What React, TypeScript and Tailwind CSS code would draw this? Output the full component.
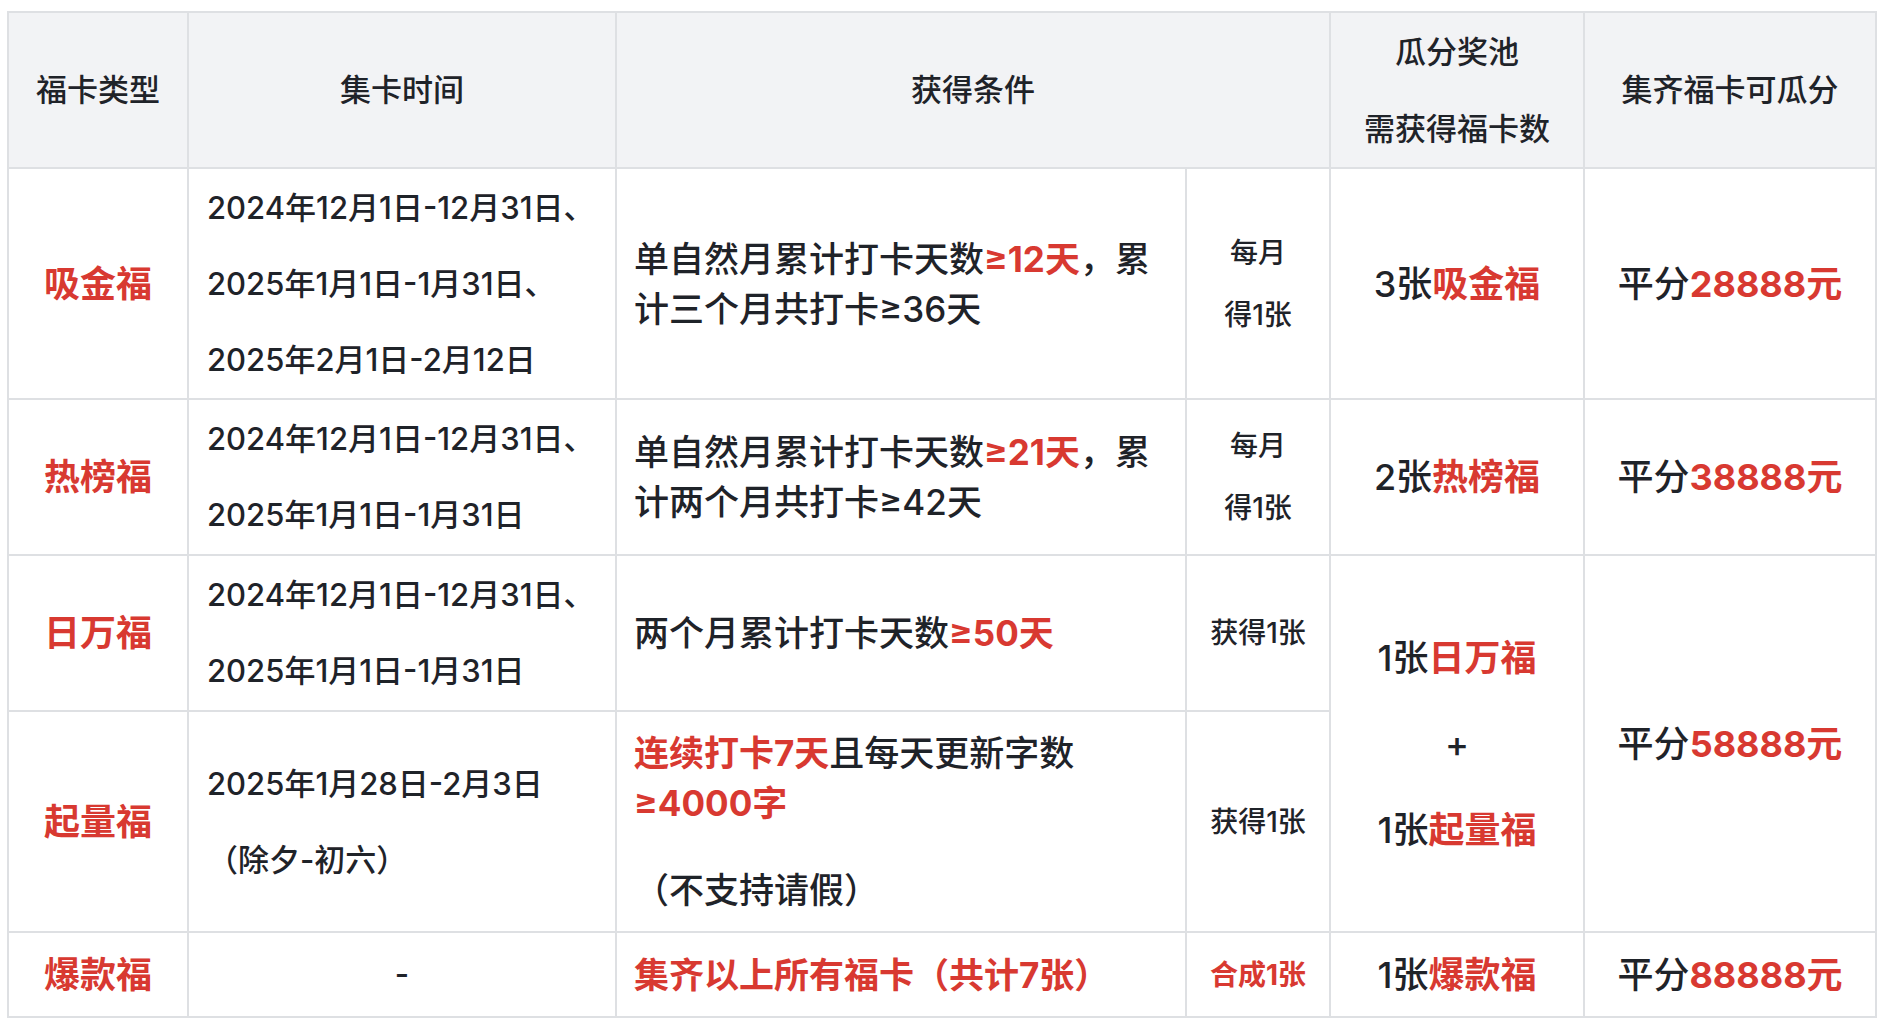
import type { ReactNode } from 'react';

// Shared cell styling: 2px light grey grid lines, everything vertically centred.
const cell = 'border-2 border-[#dee0e3] align-middle p-0';

const Red = ({ children }: { children: ReactNode }) => (
  <span className="font-bold text-[#d83931]">{children}</span>
);

// Type label in the first column.
const TypeCell = ({ name }: { name: string }) => (
  <td className={`${cell} text-center text-[36px] leading-[50px]`}>
    <Red>{name}</Red>
  </td>
);

// Date lines in the second column.
const DateCell = ({ lines }: { lines: string[] }) => (
  <td className={`${cell} pl-[18px] text-[31px]`}>
    {lines.map(line => (
      <div key={line} className="leading-[76px] whitespace-nowrap">
        {line}
      </div>
    ))}
  </td>
);

const SmallCell = ({ children, rowSpan }: { children: ReactNode; rowSpan?: number }) => (
  <td rowSpan={rowSpan} className={`${cell} text-center text-[28px] leading-[62px]`}>
    {children}
  </td>
);

export default function App() {
  return (
    <div className="min-h-screen bg-white pt-[11px] pl-[7px] font-[family-name:Inter,'Noto_Sans_CJK_SC',sans-serif] font-medium text-[#1f2329]">
      <table className="w-[1868px] table-fixed border-collapse">
        <colgroup>
          <col className="w-[180px]" />
          <col className="w-[428px]" />
          <col className="w-[570px]" />
          <col className="w-[144px]" />
          <col className="w-[254px]" />
          <col className="w-[292px]" />
        </colgroup>
        <thead>
          <tr className="h-[155px] bg-[#f2f3f5] text-[31px]">
            <th className={`${cell} font-medium`}>福卡类型</th>
            <th className={`${cell} font-medium`}>集卡时间</th>
            <th colSpan={2} className={`${cell} font-medium`}>获得条件</th>
            <th className={`${cell} font-medium`}>
              <div className="leading-[77px]">瓜分奖池</div>
              <div className="leading-[77px]">需获得福卡数</div>
            </th>
            <th className={`${cell} font-medium`}>集齐福卡可瓜分</th>
          </tr>
        </thead>
        <tbody>
          {/* 吸金福 */}
          <tr className="h-[231px]">
            <TypeCell name="吸金福" />
            <DateCell lines={['2024年12月1日-12月31日、', '2025年1月1日-1月31日、', '2025年2月1日-2月12日']} />
            <td className={`${cell} pl-[17px] text-[35px] leading-[50px] whitespace-nowrap`}>
              单自然月累计打卡天数<Red>≥12天</Red>，累
              <br />
              计三个月共打卡≥36天
            </td>
            <SmallCell>
              <div>每月</div>
              <div>得1张</div>
            </SmallCell>
            <td className={`${cell} text-center text-[36px]`}>
              3张<Red>吸金福</Red>
            </td>
            <td className={`${cell} text-center text-[36px]`}>
              平分<Red>28888元</Red>
            </td>
          </tr>

          {/* 热榜福 */}
          <tr className="h-[156px]">
            <TypeCell name="热榜福" />
            <DateCell lines={['2024年12月1日-12月31日、', '2025年1月1日-1月31日']} />
            <td className={`${cell} pl-[17px] text-[35px] leading-[50px] whitespace-nowrap`}>
              单自然月累计打卡天数<Red>≥21天</Red>，累
              <br />
              计两个月共打卡≥42天
            </td>
            <SmallCell>
              <div>每月</div>
              <div>得1张</div>
            </SmallCell>
            <td className={`${cell} text-center text-[36px]`}>
              2张<Red>热榜福</Red>
            </td>
            <td className={`${cell} text-center text-[36px]`}>
              平分<Red>38888元</Red>
            </td>
          </tr>

          {/* 日万福 */}
          <tr className="h-[156px]">
            <TypeCell name="日万福" />
            <DateCell lines={['2024年12月1日-12月31日、', '2025年1月1日-1月31日']} />
            <td className={`${cell} pl-[17px] text-[35px] leading-[50px] whitespace-nowrap`}>
              两个月累计打卡天数<Red>≥50天</Red>
            </td>
            <SmallCell>获得1张</SmallCell>
            <td rowSpan={2} className={`${cell} text-center text-[36px]`}>
              <div className="leading-[86px]">
                1张<Red>日万福</Red>
              </div>
              <div className="leading-[86px]">+</div>
              <div className="leading-[86px]">
                1张<Red>起量福</Red>
              </div>
            </td>
            <td rowSpan={2} className={`${cell} text-center text-[36px]`}>
              平分<Red>58888元</Red>
            </td>
          </tr>

          {/* 起量福 */}
          <tr className="h-[221px]">
            <TypeCell name="起量福" />
            <DateCell lines={['2025年1月28日-2月3日', '（除夕-初六）']} />
            <td className={`${cell} pl-[17px] text-[35px] leading-[50px] whitespace-nowrap`}>
              <div>
                <Red>连续打卡7天</Red>且每天更新字数
                <br />
                <Red>≥4000字</Red>
              </div>
              <div className="mt-[37px]">（不支持请假）</div>
            </td>
            <SmallCell>获得1张</SmallCell>
          </tr>

          {/* 爆款福 */}
          <tr className="h-[85px]">
            <TypeCell name="爆款福" />
            <td className={`${cell} text-center text-[31px]`}>-</td>
            <td className={`${cell} pl-[17px] text-[35px] leading-[50px] whitespace-nowrap`}>
              <Red>集齐以上所有福卡（共计7张）</Red>
            </td>
            <SmallCell>
              <Red>合成1张</Red>
            </SmallCell>
            <td className={`${cell} text-center text-[36px]`}>
              1张<Red>爆款福</Red>
            </td>
            <td className={`${cell} text-center text-[36px]`}>
              平分<Red>88888元</Red>
            </td>
          </tr>
        </tbody>
      </table>
    </div>
  );
}
